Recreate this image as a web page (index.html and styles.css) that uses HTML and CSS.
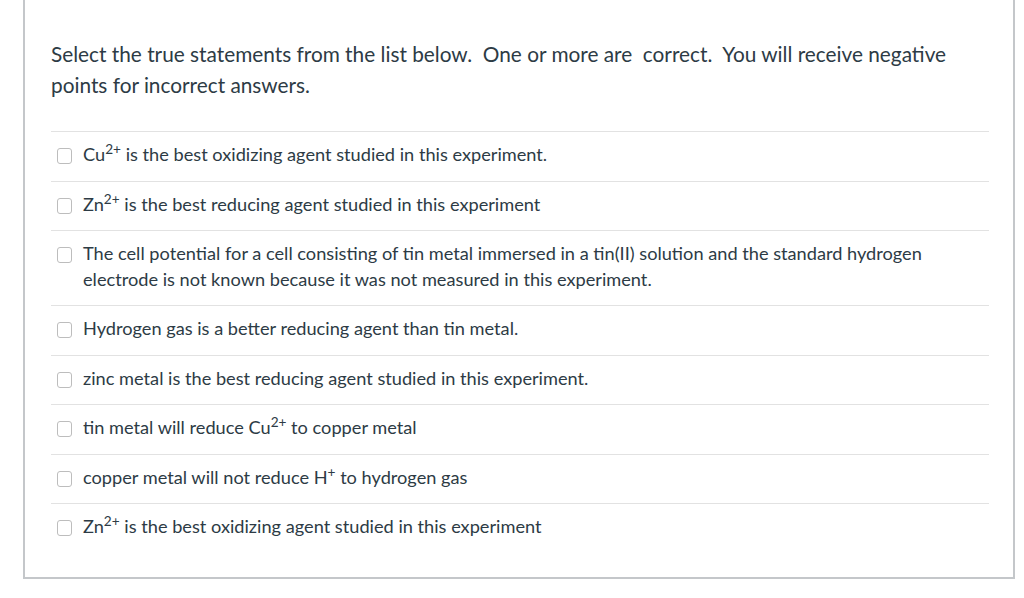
FILE: index.html
```html
<!DOCTYPE html>
<html>
<head>
<meta charset="utf-8">
<link rel="stylesheet" href="styles.css">
</head>
<body>
<div class="card">
  <p class="question">Select the true statements from the list below.&nbsp; One or more are&nbsp; correct.&nbsp; You will receive negative points for incorrect answers.</p>
  <ul class="answers">
    <li class="answer"><span class="box"></span><span class="label">Cu<sup>2+</sup> is the best oxidizing agent studied in this experiment.</span></li>
    <li class="answer"><span class="box"></span><span class="label">Zn<sup>2+</sup> is the best reducing agent studied in this experiment</span></li>
    <li class="answer"><span class="box"></span><span class="label">The cell potential for a cell consisting of tin metal immersed in a tin(II) solution and the standard hydrogen electrode is not known because it was not measured in this experiment.</span></li>
    <li class="answer"><span class="box"></span><span class="label">Hydrogen gas is a better reducing agent than tin metal.</span></li>
    <li class="answer"><span class="box"></span><span class="label">zinc metal is the best reducing agent studied in this experiment.</span></li>
    <li class="answer"><span class="box"></span><span class="label">tin metal will reduce Cu<sup>2+</sup> to copper metal</span></li>
    <li class="answer"><span class="box"></span><span class="label">copper metal will not reduce H<sup>+</sup> to hydrogen gas</span></li>
    <li class="answer"><span class="box"></span><span class="label">Zn<sup>2+</sup> is the best oxidizing agent studied in this experiment</span></li>
  </ul>
</div>
</body>
</html>
```
FILE: styles.css
```css
html, body {
  margin: 0;
  padding: 0;
  background: #ffffff;
}
body {
  font-family: Lato, "Noto Sans", sans-serif;
  color: #2d3b45;
}
.card {
  margin-left: 23px;
  border: 2px solid #c4c7ca;
  border-top: none;
  padding: 38px 24px 24px 26px;
  box-sizing: content-box;
  width: 938px;
}
.question {
  margin: 0;
  font-size: 20.8px;
  line-height: 31px;
}
.answers {
  list-style: none;
  margin: 31px 0 0 0;
  padding: 0;
}
.answer {
  display: flex;
  align-items: flex-start;
  border-top: 1px solid #e2e2e2;
  padding: 10px 0 13px 6px;
  font-size: 18.2px;
  line-height: 25.5px;
}
.box {
  flex: none;
  width: 13px;
  height: 14px;
  border: 1px solid #bdbdbd;
  border-radius: 3px;
  margin-top: 6px;
  margin-right: 11px;
  background: #fff;
}
.label sup {
  font-size: 0.75em;
  line-height: 0;
  vertical-align: 0.55em;
}
```
